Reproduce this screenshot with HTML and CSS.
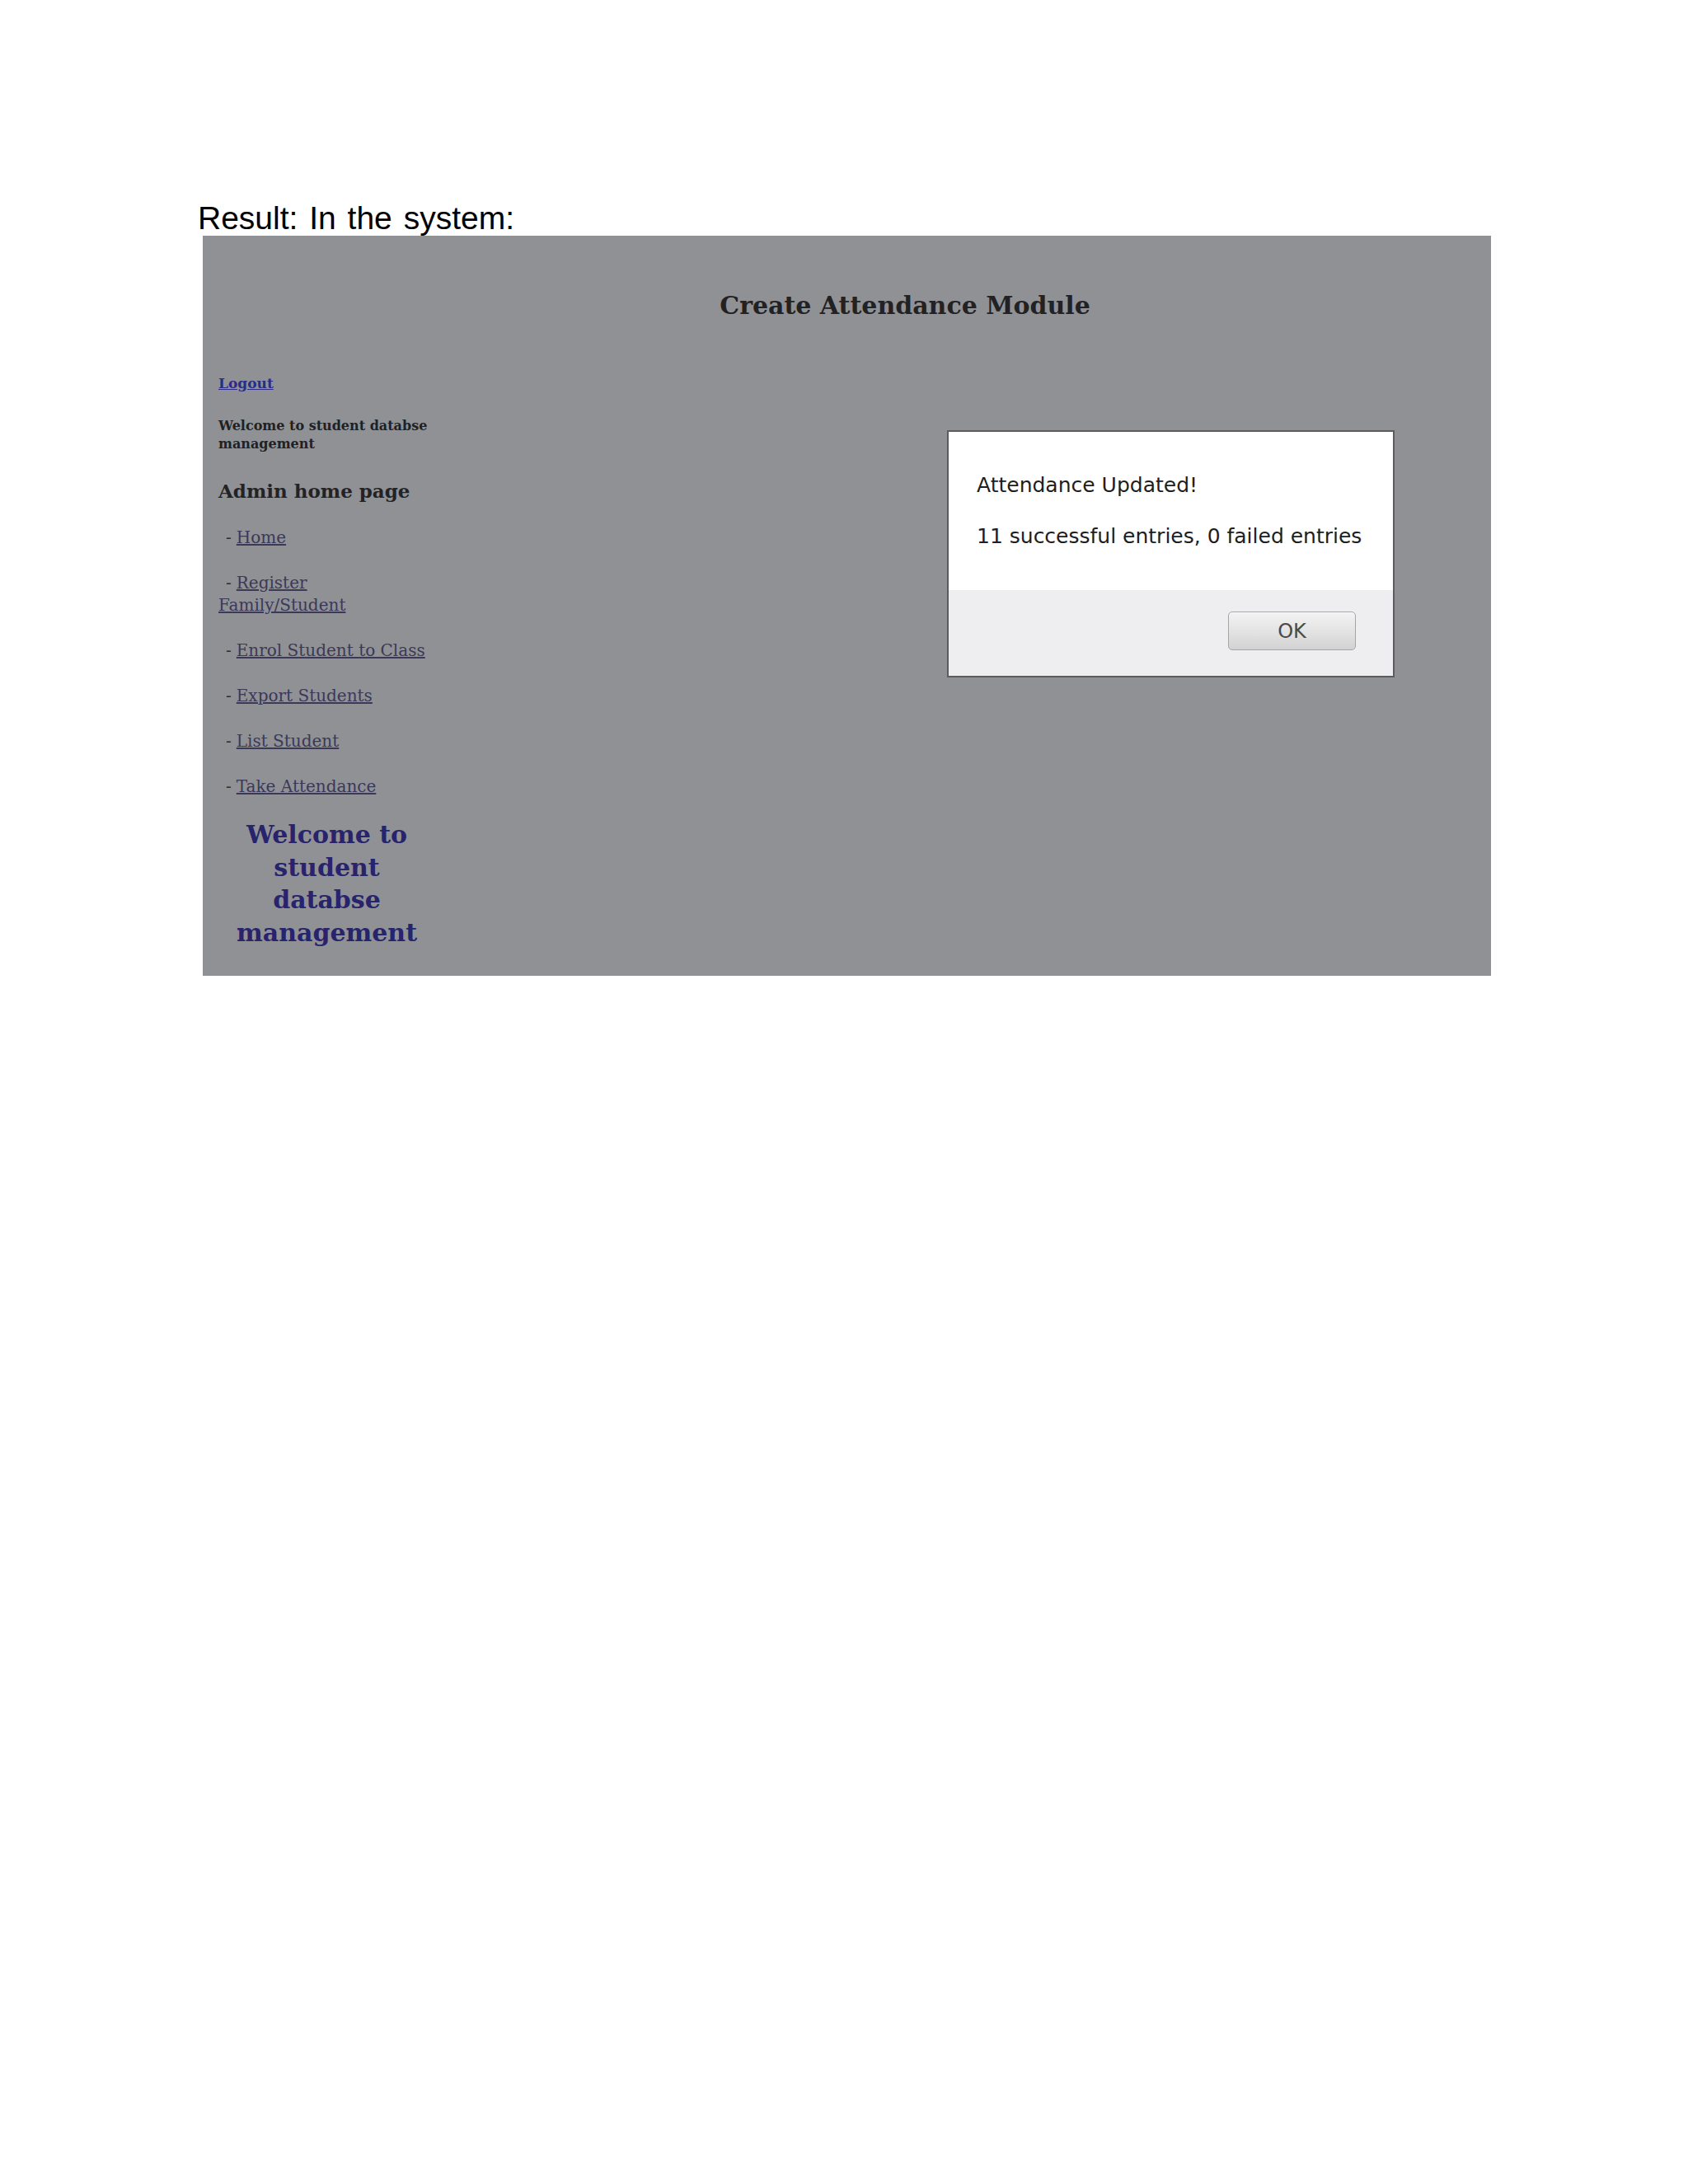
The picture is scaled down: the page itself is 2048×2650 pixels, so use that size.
FILE: index.html
```html
<!DOCTYPE html>
<html lang="en">
<head>
<meta charset="utf-8">
<title>Result: In the system</title>
<link rel="stylesheet" href="styles.css">
</head>
<body>
<main class="doc">
  <p class="caption">Result: In the system:</p>
  <div class="shot">
    <h1 class="page-title">Create Attendance Module</h1>
    <aside class="sidebar">
      <a class="logout" href="#">Logout</a>
      <p class="welcome-small">Welcome to student databse management</p>
      <h2 class="admin">Admin home page</h2>
      <ul class="nav">
        <li><span class="dash">-</span><a href="#">Home</a></li>
        <li><span class="dash">-</span><a href="#">Register</a> <a href="#">Family/Student</a></li>
        <li><span class="dash">-</span><a href="#">Enrol Student to Class</a></li>
        <li><span class="dash">-</span><a href="#">Export Students</a></li>
        <li><span class="dash">-</span><a href="#">List Student</a></li>
        <li><span class="dash">-</span><a href="#">Take Attendance</a></li>
      </ul>
      <h2 class="welcome-big">Welcome to student databse management</h2>
    </aside>
    <div class="dialog" role="alertdialog">
      <div class="dialog-body">
        <p class="dialog-line">Attendance Updated!</p>
        <p class="dialog-line second">11 successful entries, 0 failed entries</p>
      </div>
      <div class="dialog-footer">
        <button class="ok-btn" type="button">OK</button>
      </div>
    </div>
  </div>
</main>
</body>
</html>
```

FILE: styles.css
```css
html, body {
  margin: 0;
  padding: 0;
  background: #ffffff;
}

.doc {
  padding-top: 244px;
  min-height: 2406px;
}

.caption {
  margin: 0;
  padding-left: 240px;
  font-family: "Liberation Sans", Arial, sans-serif;
  font-size: 39px;
  line-height: 42px;
  color: #000000;
  word-spacing: 3px;
}

.shot {
  position: relative;
  margin-left: 246px;
  width: 1563px;
  height: 898px;
  background: #909195;
  padding-top: 65px;
  box-sizing: border-box;
  font-family: "DejaVu Serif", serif;
  color: #232325;
}

.page-title {
  margin: 0;
  padding-left: 141px;
  text-align: center;
  font-size: 30px;
  line-height: 40px;
  font-weight: bold;
  color: #222224;
}

.sidebar {
  margin-top: 63px;
  margin-left: 19px;
  width: 263px;
}

.logout {
  display: block;
  width: max-content;
  font-size: 17px;
  line-height: 22px;
  font-weight: bold;
  color: #2c2b86;
  text-decoration: underline;
}

.welcome-small {
  margin: 30px 0 0;
  font-size: 16px;
  line-height: 22px;
  font-weight: bold;
  color: #212123;
}

.admin {
  margin: 31px 0 0;
  font-size: 23px;
  line-height: 30px;
  font-weight: bold;
  color: #232325;
}

.nav {
  list-style: none;
  margin: 28px 0 0;
  padding: 0;
  font-size: 20px;
  line-height: 27px;
  color: #2e2e33;
}

.nav li {
  margin-bottom: 28px;
}

.nav li:last-child {
  margin-bottom: 0;
}

.dash {
  display: inline-block;
  margin-left: 9px;
  margin-right: 6px;
}

.nav a {
  color: #3b3858;
  text-decoration: underline;
}

.welcome-big {
  margin: 25px 0 0;
  text-align: center;
  font-size: 30px;
  line-height: 39.5px;
  font-weight: bold;
  color: #27236c;
}

.dialog {
  position: absolute;
  left: 903px;
  top: 236px;
  width: 543px;
  height: 300px;
  box-sizing: border-box;
  border: 2px solid #5c5c5e;
  background: #ffffff;
  font-family: "DejaVu Sans", sans-serif;
  display: flex;
  flex-direction: column;
}

.dialog-body {
  height: 192px;
  box-sizing: border-box;
  padding: 50px 0 0 34px;
  background: #ffffff;
}

.dialog-line {
  margin: 0;
  font-size: 25px;
  line-height: 30px;
  color: #1e1e1e;
  white-space: nowrap;
}

.dialog-line.second {
  margin-top: 32px;
}

.dialog-footer {
  flex: 1;
  background: #eeeef0;
  display: flex;
  justify-content: flex-end;
  align-items: flex-start;
  padding: 26px 45px 0 0;
}

.ok-btn {
  width: 155px;
  height: 47px;
  border: 1px solid #a5a5a7;
  border-radius: 5px;
  background: linear-gradient(to bottom, #f3f3f3 0%, #e2e2e2 55%, #d2d2d3 100%);
  box-shadow: inset 0 1px 0 #fafafa;
  font-family: "DejaVu Sans", sans-serif;
  font-size: 24px;
  color: #4a4a4c;
  padding: 0;
}
```
